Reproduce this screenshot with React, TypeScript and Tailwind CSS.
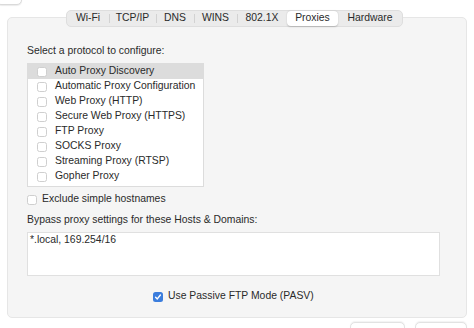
import React from "react";

const font = { fontFamily: '"Liberation Sans", Arial, sans-serif' };

function Box({ checked = false }: { checked?: boolean }) {
  if (checked) {
    return (
      <span className="flex h-[10px] w-[10px] items-center justify-center rounded-[2.5px] bg-[#3b7ddd]">
        <svg width="8" height="8" viewBox="0 0 8 8">
          <path d="M1.6 4.2 L3.3 5.9 L6.4 2" stroke="white" strokeWidth="1.4" fill="none" strokeLinecap="round" strokeLinejoin="round" />
        </svg>
      </span>
    );
  }
  return <span className="block h-[10px] w-[10px] rounded-[2.5px] border border-[#cfcfcf] bg-white" />;
}

const tabs: { t: string; w: string; sep: boolean }[] = [
  { t: "Wi-Fi", w: "w-[42px]", sep: false },
  { t: "TCP/IP", w: "w-[47px]", sep: true },
  { t: "DNS", w: "w-[38px]", sep: true },
  { t: "WINS", w: "w-[43px]", sep: true },
  { t: "802.1X", w: "w-[50px]", sep: true },
  { t: "Proxies", w: "w-[51px]", sep: false },
  { t: "Hardware", w: "w-[64px]", sep: false },
];

const protocols = [
  "Auto Proxy Discovery",
  "Automatic Proxy Configuration",
  "Web Proxy (HTTP)",
  "Secure Web Proxy (HTTPS)",
  "FTP Proxy",
  "SOCKS Proxy",
  "Streaming Proxy (RTSP)",
  "Gopher Proxy",
];

export default function App() {
  return (
    <div className="relative h-[328px] w-[474px] overflow-hidden bg-white text-[10.4px] text-[#2a2a2a]" style={font}>
      {/* partial button top-left */}
      <div className="absolute left-[-4px] top-[-16px] h-[21px] w-[26px] rounded-[5px] border border-[#dadada] bg-white shadow-[0_1px_1px_rgba(0,0,0,0.08)]" />
      {/* partial buttons bottom-right */}
      <div className="absolute left-[350px] top-[322px] h-[20px] w-[55px] rounded-[5px] border border-[#e2e2e2] bg-white shadow-[0_-0.5px_1px_rgba(0,0,0,0.05)]" />
      <div className="absolute left-[415px] top-[322px] h-[20px] w-[52px] rounded-[5px] border border-[#e2e2e2] bg-white shadow-[0_-0.5px_1px_rgba(0,0,0,0.05)]" />

      <div className="pl-[7px] pt-[17px]">
        <div className="relative h-[301px] w-[460px] rounded-[5px] border border-[#e6e6e6] bg-[#f5f5f5] pl-[19px] pt-[26px]">
          {/* tab bar */}
          <div className="absolute left-[58px] top-[-8px] flex h-[17px] items-center rounded-[5px] border border-[#dedede] bg-[#ebebeb] whitespace-nowrap">
            {tabs.map(({ t, w, sep }) => {
              const sel = t === "Proxies";
              return (
                <div key={t} className={`relative flex h-[15px] ${w} shrink-0 items-center justify-center`}>
                  {sep && <span className="absolute left-0 top-[3px] h-[9px] w-px bg-[#d2d2d2]" />}
                  <span
                    className={`flex h-[15px] w-full items-center justify-center leading-none ${
                      sel ? "rounded-[4px] bg-white shadow-[0_0.5px_1.5px_rgba(0,0,0,0.2)]" : ""
                    }`}
                  >
                    {t}
                  </span>
                </div>
              );
            })}
          </div>

          <div className="leading-[13px]">Select a protocol to configure:</div>

          <div className="mt-[6px] h-[124px] w-[177px] border border-[#dcdcdc] bg-white">
            {protocols.map((p, i) => (
              <div key={p} className={`flex h-[15px] items-center whitespace-nowrap ${i === 0 ? "bg-[#dcdcdc]" : ""}`}>
                <span className="ml-[9px] mr-[8px]">
                  <Box />
                </span>
                <span className="leading-none">{p}</span>
              </div>
            ))}
          </div>

          <div className="mt-[6px] flex h-[13px] items-center">
            <Box />
            <span className="ml-[5px] leading-none">Exclude simple hostnames</span>
          </div>

          <div className="mt-[7px] leading-[13px]">Bypass proxy settings for these Hosts &amp; Domains:</div>

          <div className="mt-[6px] h-[44px] w-[413px] border border-[#e0e0e0] bg-white pl-[2px] pt-[1px] leading-[11px]">
            *.local, 169.254/16
          </div>

          <div className="mt-[14px] flex h-[13px] items-center pl-[126px]">
            <Box checked />
            <span className="ml-[5px] leading-none">Use Passive FTP Mode (PASV)</span>
          </div>
        </div>
      </div>
    </div>
  );
}
